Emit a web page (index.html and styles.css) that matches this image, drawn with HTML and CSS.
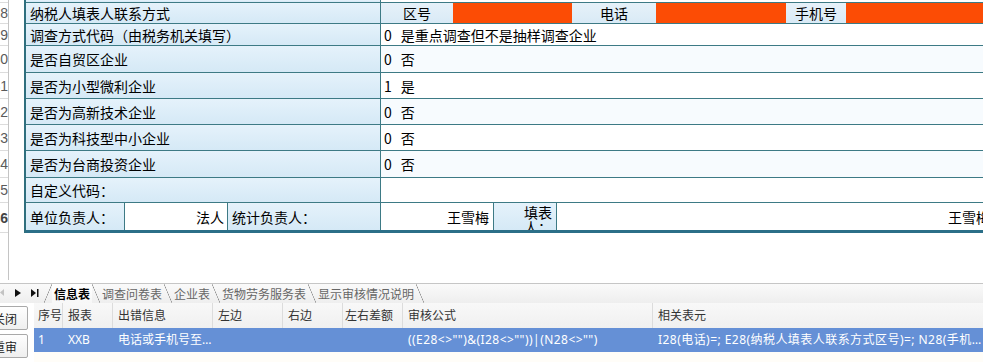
FILE: index.html
```html
<!DOCTYPE html>
<html lang="zh-CN">
<head>
<meta charset="utf-8">
<title>信息表</title>
<link rel="stylesheet" href="styles.css">
</head>
<body>
<div class="page">
  <div class="sheet">
    <div class="rownums">
      <div class="rn r0"></div>
      <div class="rn r1">28</div>
      <div class="rn r2">29</div>
      <div class="rn r3">30</div>
      <div class="rn r4">31</div>
      <div class="rn r5">32</div>
      <div class="rn r6">33</div>
      <div class="rn r7">34</div>
      <div class="rn r8">35</div>
      <div class="rn r9 cur">36</div>
    </div>
    <div class="form">
      <div class="row r0">
        <div class="cell lab w-label"></div>
        <div class="cell val"></div>
      </div>
      <div class="row r1">
        <div class="cell lab w-label">纳税人填表人联系方式</div>
        <div class="cell lab sub w-qh">区号</div>
        <div class="cell hot w-o1"></div>
        <div class="cell lab sub w-dh">电话</div>
        <div class="cell hot w-o2"></div>
        <div class="cell lab sub w-sj">手机号</div>
        <div class="cell hot fill"></div>
      </div>
      <div class="row r2">
        <div class="cell lab w-label">调查方式代码（由税务机关填写）</div>
        <div class="cell val"><span class="code">0</span>是重点调查但不是抽样调查企业</div>
      </div>
      <div class="row r3">
        <div class="cell lab w-label">是否自贸区企业</div>
        <div class="cell val"><span class="code">0</span>否</div>
      </div>
      <div class="row r4">
        <div class="cell lab w-label">是否为小型微利企业</div>
        <div class="cell val"><span class="code">1</span>是</div>
      </div>
      <div class="row r5">
        <div class="cell lab w-label">是否为高新技术企业</div>
        <div class="cell val"><span class="code">0</span>否</div>
      </div>
      <div class="row r6">
        <div class="cell lab w-label">是否为科技型中小企业</div>
        <div class="cell val"><span class="code">0</span>否</div>
      </div>
      <div class="row r7">
        <div class="cell lab w-label">是否为台商投资企业</div>
        <div class="cell val"><span class="code">0</span>否</div>
      </div>
      <div class="row r8">
        <div class="cell lab w-label">自定义代码：</div>
        <div class="cell val"></div>
      </div>
      <div class="row r9">
        <div class="cell lab w-dw">单位负责人：</div>
        <div class="cell white right w-fr">法人</div>
        <div class="cell lab w-tj">统计负责人：</div>
        <div class="cell white right w-wx">王雪梅</div>
        <div class="cell lab wrapcell w-tb">填表人：</div>
        <div class="cell white right last">王雪梅</div>
      </div>
    </div>
  </div>

  <div class="tabbar">
    <svg class="nav" width="44" height="19" viewBox="0 0 44 19">
      <polygon points="4,5 4,12 0,8.5" fill="#c3c3c3"/>
      <polygon points="15,5 15,13 21,9" fill="#111"/>
      <polygon points="31,5 31,13 36,9" fill="#111"/>
      <rect x="37" y="5" width="1.5" height="8" fill="#111"/>
    </svg>
    <span class="sep back"></span>
    <span class="tab active">信息表</span>
    <span class="sep"></span>
    <span class="tab">调查问卷表</span>
    <span class="sep"></span>
    <span class="tab">企业表</span>
    <span class="sep"></span>
    <span class="tab">货物劳务服务表</span>
    <span class="sep"></span>
    <span class="tab">显示审核情况说明</span>
    <span class="sep"></span>
  </div>

  <div class="bottom">
    <div class="btns">
      <div class="btn">关闭</div>
      <div class="btn">重审</div>
    </div>
    <div class="grid">
      <div class="ghead">
        <div class="gcell c-no">序号</div>
        <div class="gcell c-rep">报表</div>
        <div class="gcell c-msg">出错信息</div>
        <div class="gcell c-l">左边</div>
        <div class="gcell c-r">右边</div>
        <div class="gcell c-d">左右差额</div>
        <div class="gcell c-f">审核公式</div>
        <div class="gcell c-rel">相关表元</div>
      </div>
      <div class="gsel">
        <div class="gcell c-no">1</div>
        <div class="gcell c-rep">XXB</div>
        <div class="gcell c-msg">电话或手机号至少填写一项</div>
        <div class="gcell c-l"></div>
        <div class="gcell c-r"></div>
        <div class="gcell c-d"></div>
        <div class="gcell c-f wide">((E28&lt;&gt;"")&amp;(I28&lt;&gt;""))|(N28&lt;&gt;"")</div>
        <div class="gcell c-rel wide">I28(电话)=; E28(纳税人填表人联系方式区号)=; N28(手机号)=</div>
      </div>
      <div class="gfill"></div>
    </div>
  </div>
</div>
</body>
</html>
```

FILE: styles.css
```css
* {
  box-sizing: border-box;
  margin: 0;
  padding: 0;
}

html, body {
  width: 983px;
  height: 362px;
  overflow: hidden;
  background: #ffffff;
}

body {
  font-family: "Noto Sans CJK SC", "Noto Sans", sans-serif;
  color: #000;
}

.page {
  width: 983px;
  height: 362px;
  overflow: hidden;
  display: flex;
  flex-direction: column;
}

/* ---------- spreadsheet area ---------- */
.sheet {
  height: 283px;
  flex: none;
  display: flex;
  align-items: flex-start;
}

.rownums {
  width: 9px;
  height: 280px;
  flex: none;
  border-right: 1px solid #c4c4c4;
  display: flex;
  flex-direction: column;
  overflow: hidden;
}

.rn {
  flex: none;
  border-bottom: 1px solid #dcdcdc;
  font: 14px "Liberation Sans", sans-serif;
  color: #5a5a5a;
  display: flex;
  align-items: center;
  justify-content: flex-end;
  overflow: hidden;
  white-space: nowrap;
}

.rn.cur {
  font-weight: bold;
  color: #444;
}

.r0 { height: 3px; }
.r1 { height: 21px; }
.r2 { height: 22px; }
.r3 { height: 27px; }
.r4 { height: 26px; }
.r5 { height: 26px; }
.r6 { height: 26px; }
.r7 { height: 27px; }
.r8 { height: 25px; }
.r9 { height: 30px; }

.form {
  width: 976px;
  margin-left: 15px;
  flex: none;
  border-left: 2px solid #2f6f7e;
  display: flex;
  flex-direction: column;
  font-size: 14px;
}

.row {
  display: flex;
  flex: none;
  border-bottom: 1px solid #3d7a85;
}

.row.r9 {
  border-bottom: 3px solid #2b6f88;
}

.cell {
  display: flex;
  align-items: center;
  white-space: nowrap;
  overflow: hidden;
  flex: none;
  border-right: 1px solid #3d7a85;
}

.lab {
  background: linear-gradient(#e5f2fb, #d5e9f6);
  padding-left: 4px;
}

.val {
  flex: 1;
  border-right: none;
  background: #fff;
  padding-left: 3px;
}

.row.r3 .val, .row.r5 .val, .row.r7 .val {
  background: #f7fbfe;
}

.code {
  margin-right: 9px;
}

.w-label { width: 355px; }

/* row with orange input cells */
.sub {
  border-right: none;
  padding-left: 0;
  justify-content: center;
  background: linear-gradient(#e6f1f9, #d9eaf6);
}

.w-qh { width: 72px; }
.w-o1 { width: 119px; }
.w-dh { width: 84px; }
.w-o2 { width: 130px; }
.w-sj { width: 60px; }

.hot {
  background: #fc4c05;
  border-right: none;
}

.fill {
  flex: 1;
}

/* signature row */
.white {
  background: #fff;
}

.right {
  justify-content: flex-end;
  padding-right: 3px;
}

.w-dw { width: 99px; }
.w-fr { width: 103px; }
.w-tj { width: 153px; }
.w-wx { width: 113px; padding-right: 4px; }
.w-tb { width: 63px; }

.wrapcell {
  white-space: normal;
  align-items: flex-start;
  padding: 2px 3px 0 30px;
  line-height: 15px;
}

.last {
  flex: 1;
  border-right: none;
  padding-right: 10px;
}

/* ---------- sheet tabs ---------- */
.tabbar {
  height: 20px;
  flex: none;
  border-top: 1px solid #c6c6c6;
  background: linear-gradient(#fafafa, #eeeeee);
  display: flex;
  align-items: stretch;
  font-size: 12px;
  color: #666;
}

.nav {
  flex: none;
  display: block;
}

.sep {
  width: 8px;
  flex: none;
  background: linear-gradient(to top right, transparent calc(50% - 0.6px), #8c8c8c, transparent calc(50% + 0.6px));
}

.sep.back {
  background: linear-gradient(to bottom right, transparent calc(50% - 0.6px), #8c8c8c, transparent calc(50% + 0.6px));
}

.tab {
  padding: 0 2px;
  display: flex;
  align-items: center;
  white-space: nowrap;
}

.tab.active {
  color: #000;
  font-weight: bold;
  background: linear-gradient(#ffffff, #f7f7f7);
}

/* ---------- result grid ---------- */
.bottom {
  height: 59px;
  flex: none;
  display: flex;
}

.btns {
  width: 34px;
  flex: none;
  display: flex;
  flex-direction: column;
  gap: 4px;
  padding-top: 3px;
  overflow: hidden;
  background: #fff;
}

.btn {
  width: 46px;
  height: 24px;
  margin-left: -18px;
  flex: none;
  border: 1px solid #a9a9a9;
  border-radius: 2px;
  background: linear-gradient(#fefefe, #efefef);
  font-size: 12px;
  color: #222;
  display: flex;
  align-items: center;
  justify-content: center;
}

.grid {
  width: 949px;
  flex: none;
  display: flex;
  flex-direction: column;
  font-family: "Noto Sans", "Noto Sans CJK SC", sans-serif;
  font-size: 12px;
}

.ghead {
  height: 25px;
  flex: none;
  display: flex;
  background: linear-gradient(#f8f8f8, #f0f0f0);
  color: #333;
}

.gsel {
  height: 24px;
  flex: none;
  display: flex;
  background: #6590d6;
  color: #fff;
}

.gfill {
  flex: 1;
  background: #fffdf8;
}

.gcell {
  flex: none;
  display: block;
  white-space: nowrap;
  overflow: hidden;
  text-overflow: ellipsis;
  padding-left: 5px;
}

.ghead .gcell {
  line-height: 25px;
  border-right: 1px solid #dcdcdc;
}

.gsel .gcell {
  line-height: 24px;
}

.gsel .wide {
  letter-spacing: 0.45px;
}

.c-no { width: 29px; padding-left: 4px; }
.c-rep { width: 50px; }
.c-msg { width: 100px; padding-right: 1px; }
.c-l { width: 70px; }
.c-r { width: 60px; }
.c-d { width: 60px; padding-left: 2px; }
.c-f { width: 250px; }
.c-rel { flex: 1; padding-right: 0; }
.ghead .c-rel { border-right: none; }
```
